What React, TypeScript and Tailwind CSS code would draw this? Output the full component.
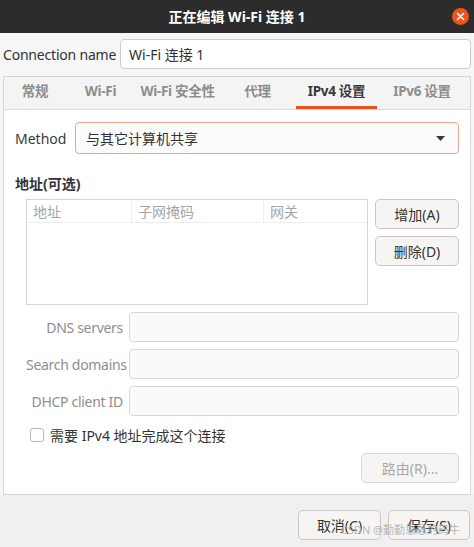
import React from 'react';

const font = { fontFamily: '"Noto Sans", "Noto Sans CJK SC", sans-serif' };

const Btn: React.FC<{ label: string; className?: string; disabled?: boolean }> = ({ label, className = '', disabled }) => (
  <div
    className={`h-[30px] flex items-center justify-center rounded-[5px] border bg-[#f6f5f4] text-[14px] ${
      disabled ? 'text-[#a8a8a8] border-[#ddd9d6]' : 'text-[#333] border-[#cdc7c2]'
    } ${className}`}
  >
    {label}
  </div>
);

const Entry: React.FC<{ className?: string }> = ({ className = '' }) => (
  <div className={`h-[30px] rounded-[4px] border border-[#dad6d3] bg-[#fafafa] ${className}`} />
);

// tab label + fixed width, so the centres sit where the reference has them
const tabs: [string, string][] = [
  ['常规', 'w-[60px]'],
  ['Wi-Fi', 'w-[71px]'],
  ['Wi-Fi 安全性', 'w-[83px]'],
  ['代理', 'w-[77px]'],
  ['IPv4 设置', 'w-[81px]'],
  ['IPv6 设置', 'w-[90px]'],
];

export default function App() {
  return (
    <div className="w-[474px] h-[547px] bg-[#f6f6f6] flex flex-col overflow-hidden relative" style={font}>
      {/* title bar */}
      <div className="h-[33px] bg-[#2c2c2c] flex items-center justify-center relative shrink-0">
        <span className="text-white font-bold text-[14px]">正在编辑 Wi-Fi 连接 1</span>
        <div className="absolute right-[5px] top-[8px] w-[17px] h-[17px] rounded-full bg-[#e95420] flex items-center justify-center">
          <svg width="9" height="9" viewBox="0 0 9 9">
            <path d="M1.5 1.5 L7.5 7.5 M7.5 1.5 L1.5 7.5" stroke="white" strokeWidth="1.6" strokeLinecap="round" />
          </svg>
        </div>
      </div>

      {/* connection name */}
      <div className="flex items-center pl-[3px] pr-[3px] mt-[6px]">
        <span className="w-[117px] text-[14px] text-[#333] tracking-[-0.2px] whitespace-nowrap">Connection name</span>
        <div className="flex-1 h-[30px] rounded-[4px] border border-[#cfcbc8] bg-white flex items-center px-[8px] text-[14px] text-[#333]">
          Wi-Fi 连接 1
        </div>
      </div>

      {/* notebook */}
      <div className="mx-[3px] mt-[7px] border border-[#d8d5d2] bg-white flex flex-col">
        <div className="h-[33px] bg-[#f4f4f4] border-b border-[#dedad7] flex items-stretch pl-[1px]">
          {tabs.map(([t, w]) => {
            const active = t === 'IPv4 设置';
            return (
              <div
                key={t}
                className={`${w} shrink-0 flex items-center justify-center whitespace-nowrap text-[13.5px] tracking-[-0.3px] font-bold border-b-[3px] ${
                  active ? 'text-[#3a3a3a] border-[#e95420]' : 'text-[#8d8d8d] border-transparent'
                }`}
              >
                {t}
              </div>
            );
          })}
        </div>

        <div className="pl-[11px] pr-[11px] pt-[12px] pb-[11px] flex flex-col">
          {/* method */}
          <div className="flex items-center">
            <span className="w-[60px] text-[14px] text-[#3a3a3a]">Method</span>
            <div className="flex-1 h-[32px] rounded-[4px] border border-[#eba58f] bg-[#fbfbfb] flex items-center justify-between pl-[10px] pr-[13px] text-[14px] text-[#333]">
              <span>与其它计算机共享</span>
              <svg width="9" height="5" viewBox="0 0 9 5">
                <path d="M0 0 L9 0 L4.5 5 Z" fill="#3a3a3a" />
              </svg>
            </div>
          </div>

          <div className="mt-[20px] text-[14px] font-bold text-[#333] leading-[20px]">地址(可选)</div>

          <div className="mt-[5px] pl-[11px] flex gap-[7px]">
            <div className="w-[344px] h-[106px] border border-[#d8d5d2] bg-white">
              <div className="h-[23px] flex items-center text-[14px] text-[#a5a5a5] border-b border-[#f0eeec]">
                <div className="w-[105px] pl-[6px] border-r border-[#f0eeec] h-full flex items-center">地址</div>
                <div className="w-[132px] pl-[6px] border-r border-[#f0eeec] h-full flex items-center">子网掩码</div>
                <div className="flex-1 pl-[6px]">网关</div>
              </div>
            </div>
            <div className="flex flex-col gap-[7px]">
              <Btn label="增加(A)" className="w-[84px]" />
              <Btn label="删除(D)" className="w-[84px]" />
            </div>
          </div>

          {/* disabled entries */}
          <div className="mt-[7px] pl-[11px] flex flex-col gap-[7px]">
            {['DNS servers', 'Search domains', 'DHCP client ID'].map((l) => (
              <div key={l} className="flex items-center gap-[6px]">
                <span className="w-[97px] text-right text-[14px] text-[#8e8e8e] tracking-[-0.3px] whitespace-nowrap">{l}</span>
                <Entry className="flex-1" />
              </div>
            ))}
          </div>

          <div className="mt-[9px] pl-[15px] flex items-center gap-[6px] h-[20px]">
            <div className="w-[14px] h-[14px] rounded-[3px] border border-[#bdb8b4] bg-white" />
            <span className="text-[14px] text-[#333]">需要 IPv4 地址完成这个连接</span>
          </div>

          <div className="mt-[8px] flex justify-end">
            <Btn label="路由(R)..." className="w-[98px]" disabled />
          </div>
        </div>
      </div>

      {/* footer */}
      <div className="flex-1 bg-[#f0f0f0] flex justify-end items-start pt-[15px] pr-[4px] gap-[7px]">
        <Btn label="取消(C)" className="w-[83px]" />
        <Btn label="保存(S)" className="w-[82px]" />
      </div>

      <span className="absolute right-[14px] bottom-[9px] text-[11px] text-[#b8b8b8] pointer-events-none">
        CSDN @勤勤恳恳的码牛
      </span>
    </div>
  );
}
